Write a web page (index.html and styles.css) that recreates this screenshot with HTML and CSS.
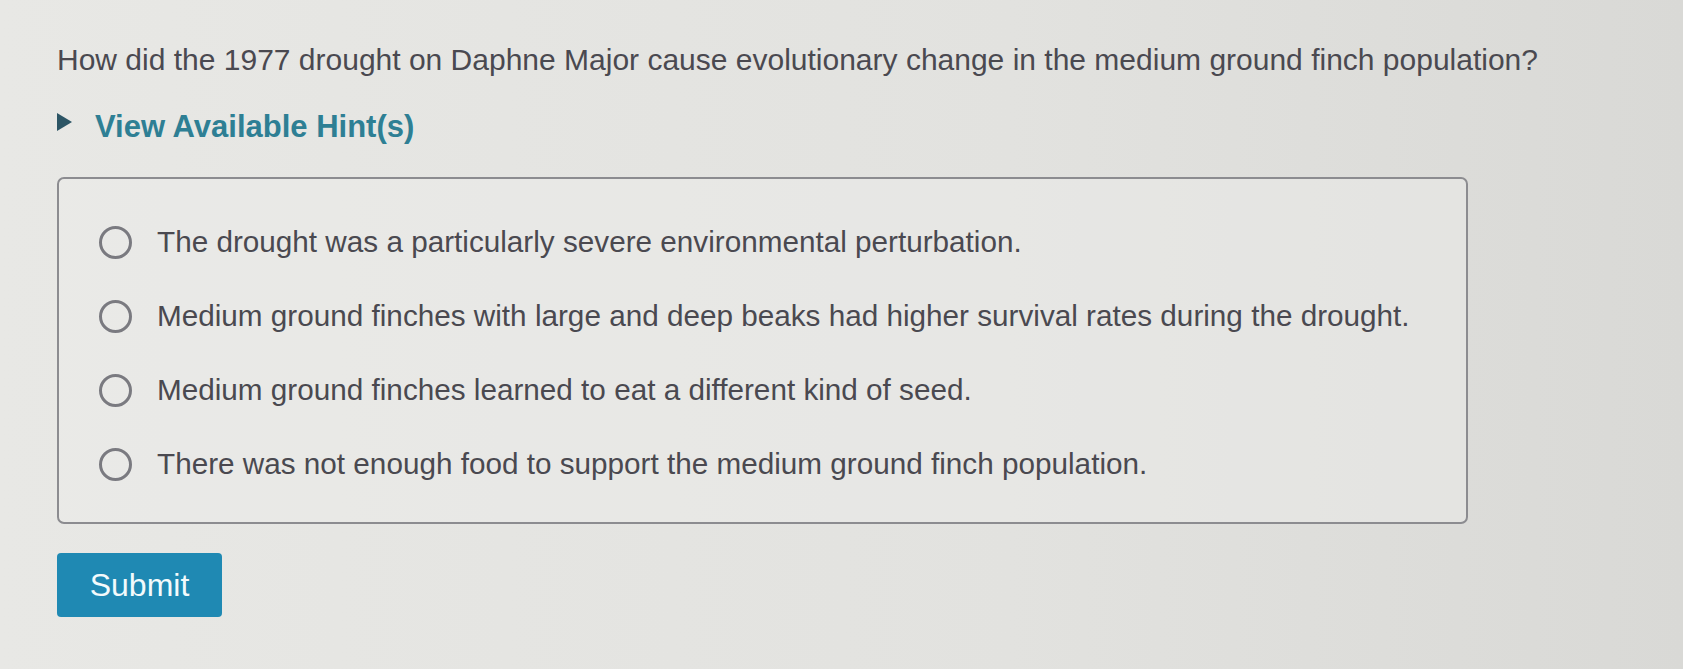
FILE: index.html
```html
<!DOCTYPE html>
<html lang="en">
<head>
    <meta charset="UTF-8">
    <meta name="viewport" content="width=device-width, initial-scale=1.0">
    <title>Question</title>
    <link rel="stylesheet" href="styles.css">
</head>
<body>
    <div class="page">
        <p class="question">How did the 1977 drought on Daphne Major cause evolutionary change in the medium ground finch population?</p>

        <div class="hints">
            <span class="hints-arrow"></span>
            <span class="hints-label">View Available Hint(s)</span>
        </div>

        <form class="answers">
            <label class="option">
                <span class="radio"></span>
                <span class="option-text">The drought was a particularly severe environmental perturbation.</span>
            </label>
            <label class="option">
                <span class="radio"></span>
                <span class="option-text">Medium ground finches with large and deep beaks had higher survival rates during the drought.</span>
            </label>
            <label class="option">
                <span class="radio"></span>
                <span class="option-text">Medium ground finches learned to eat a different kind of seed.</span>
            </label>
            <label class="option">
                <span class="radio"></span>
                <span class="option-text">There was not enough food to support the medium ground finch population.</span>
            </label>
        </form>

        <button class="submit" type="button">Submit</button>
    </div>
</body>
</html>
```

FILE: styles.css
```css
/* Global */
html,
body {
    min-height: 100%;
}

body {
    margin: 0;
    padding: 0;
    background: linear-gradient(to right, #e8e8e5, #e2e2df 60%, #d9d9d6);
    color: #4a4950;
    font-family: 'Liberation Sans', Arial, sans-serif;
}

.page {
    padding: 42px 0 0 57px;
}

/* Question */
.question {
    margin: 0;
    font-size: 30px;
    line-height: 36px;
}

/* Hints toggle */
.hints {
    display: flex;
    align-items: center;
    margin-top: 31px;
    height: 36px;
}

.hints-arrow {
    width: 0;
    height: 0;
    margin-bottom: 10px;
    border-top: 9px solid transparent;
    border-bottom: 9px solid transparent;
    border-left: 15px solid #2c5565;
}

.hints-label {
    margin-left: 23px;
    font-size: 31px;
    font-weight: bold;
    color: #2e7f94;
}

/* Answer box */
.answers {
    width: 1411px;
    margin-top: 32px;
    padding: 26px 0 21px;
    border: 2px solid #8c8c90;
    border-radius: 7px;
    background-color: rgba(236, 236, 233, 0.5);
    box-sizing: border-box;
}

.option {
    display: flex;
    align-items: center;
    height: 74px;
    padding-left: 40px;
}

.radio {
    width: 27px;
    height: 27px;
    border: 3px solid #7a7a80;
    border-radius: 50%;
    flex-shrink: 0;
}

.option-text {
    margin-left: 25px;
    font-size: 29.7px;
}

/* Submit */
.submit {
    margin-top: 29px;
    width: 165px;
    height: 64px;
    padding: 0;
    border: none;
    border-radius: 4px;
    background-color: #1f89b3;
    color: #f2fafc;
    font-family: 'Liberation Sans', Arial, sans-serif;
    font-size: 32px;
}
```
